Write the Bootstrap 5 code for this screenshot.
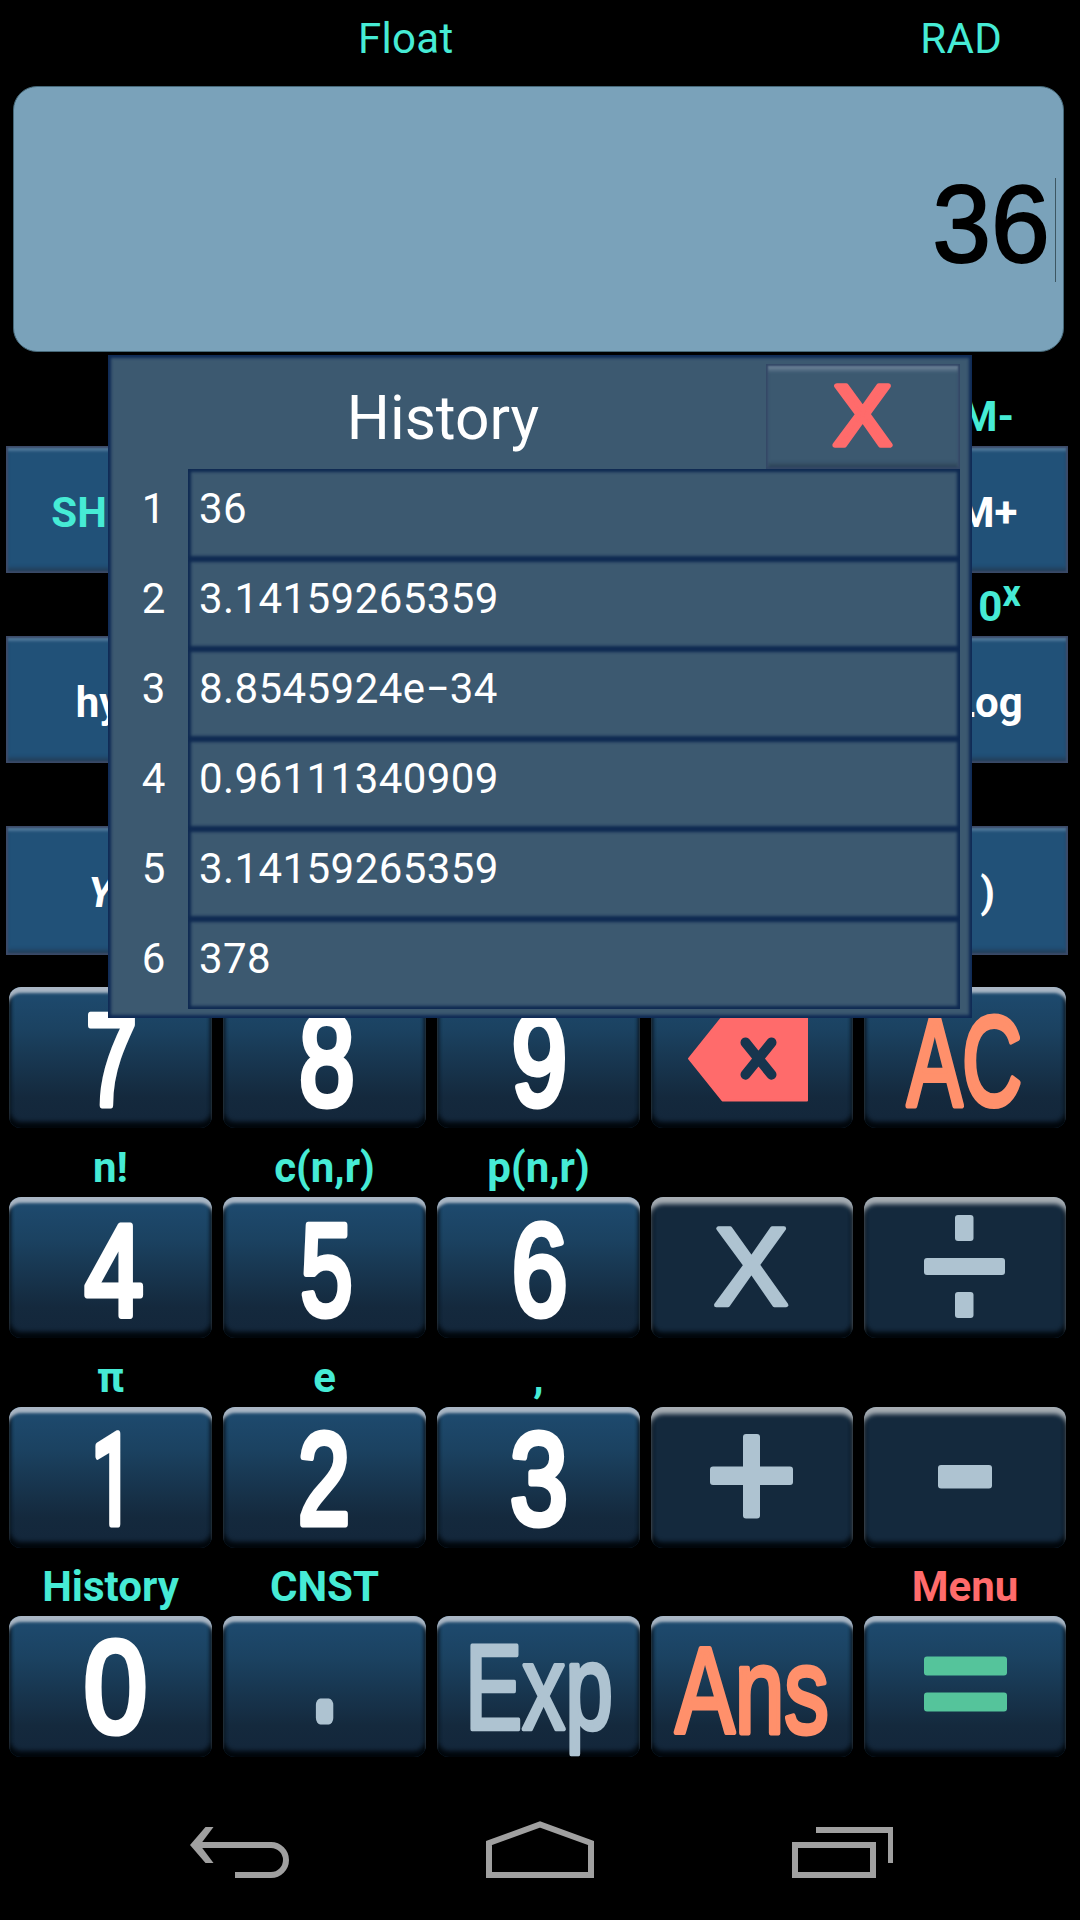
<!DOCTYPE html>
<html lang="en">
<head>
<meta charset="utf-8">
<meta name="viewport" content="width=device-width, initial-scale=1">
<title>Calculator</title>
<link href="https://cdn.jsdelivr.net/npm/bootstrap@5.3.0/dist/css/bootstrap.min.css" rel="stylesheet">
<style>
  body { background:#000; font-family:Roboto,"Noto Sans",sans-serif; font-size:42px; color:#fff; }
  .calc { width:1080px; height:1920px; }
  .teal { color:#46ebd5; }
  .coral { color:#ff6b6b; }
  .status-bar { height:86px; line-height:77px; padding-right:78px; letter-spacing:.3px; }
  .status-mode { margin-left:358px; }
  .lcd { height:266px; margin:0 16px 0 13px; padding:0 7px 0 0; background:#7aa2ba; border:1px solid #466878; border-radius:24px; }
  .caret { width:1px; height:104px; margin-top:22px; background:#3d5662; }
  .upper { padding:0 12px 0 6px; margin-top:35px; }
  .legend { height:59px; line-height:59px; font-weight:700; text-align:center; white-space:nowrap; }
  .legend sup, .flat-key sup { font-size:36px; top:-15px; line-height:0; }
  .flat-row { margin-bottom:4px; }
  .first-col { width:208px; }
  .last-col { width:166px; }
  .last-col .legend, .last-col .flat-key, .last-col.flat-key { padding-left:5px; }
  .flat-key { height:127px; padding-top:6px; line-height:121px; font-weight:700; text-align:center; background:#215178;
    box-shadow:inset 0 0 2px 2px #3c4a68, inset 0 5px 3px #4f7899, inset 0 -5px 4px #223e59; }
  .flat-row.bare { height:129px; margin-bottom:32px; }
  .bare .flat-key { height:129px; }
  .pad { padding:0 14px 0 9px; }
  .pad-row { display:grid; grid-template-columns:203px 203px 203px 202px 202px; gap:0 11px; }
  .key { height:141px; margin-bottom:10px; border-radius:12px; background:linear-gradient(#1e4b70,#1b4261 30%,#14293d 78%,#13263a);
    box-shadow:inset 0 7px 3px -1px #a9b6c4, inset 0 -5px 4px 1px #02070c, inset 0 0 4px 1px #10283c; }
  .key.op { background:#14293d; box-shadow:inset 0 8px 4px -1px #a6adb3, inset 0 -5px 4px 1px #02070c, inset 0 0 4px 1px #10283c; }
  .key svg { display:block; overflow:visible; }
  .face { font-family:"Liberation Sans",Arial,sans-serif; font-size:126px; text-anchor:middle; fill:currentColor; stroke:currentColor; stroke-width:4.5px; stroke-linejoin:round; }
  .num { font-size:130px; stroke-width:7px; }
  .mist { color:#aec3d1; }
  .orange { color:#ff906b; }
  .green { color:#55c49b; }
  .history { left:108px; top:355px; width:864px; height:663px; padding:9px 12px 9px 3px; background:#3c5970;
    box-shadow:inset 0 0 3px 3px #0f2a55; }
  .history-title { height:105px; font-size:60.5px; line-height:109px; padding-left:9px; }
  .close-key { width:194px; height:105px; box-shadow:inset 0 0 2px 2px #334766, inset 0 6px 4px #6c8296, inset 0 -5px 4px #2e4558; }
  .history-row { height:90px; line-height:80px; }
  .history-no { width:77px; padding-left:8px; text-align:center; }
  .history-val { padding-left:11px; letter-spacing:.42px; box-shadow:inset 0 0 3px 3px #0f2a52; }
</style>
<script src="https://cdn.jsdelivr.net/npm/bootstrap@5.3.0/dist/js/bootstrap.bundle.min.js"></script>
</head>
<body>
<main class="calc position-relative overflow-hidden d-flex flex-column">
  <header class="status-bar teal d-flex justify-content-between">
    <span class="status-mode">Float</span><span>RAD</span>
  </header>
  <section class="lcd d-flex justify-content-end align-items-center">
    <svg width="130" height="120" viewBox="0 0 130 120" color="#000"><text class="face" style="font-size:109px;stroke-width:2px" transform="translate(66 103) scale(.97 1)">36</text></svg>
    <div class="caret"></div>
  </section>

  <section class="upper">
    <div class="flat-row d-flex justify-content-between">
      <div class="first-col"><div class="legend"></div><div class="flat-key teal">SHIFT</div></div>
      <div class="last-col"><div class="legend teal">M-</div><div class="flat-key">M+</div></div>
    </div>
    <div class="flat-row d-flex justify-content-between">
      <div class="first-col"><div class="legend"></div><div class="flat-key">hyp</div></div>
      <div class="last-col"><div class="legend teal">10<sup>x</sup></div><div class="flat-key">Log</div></div>
    </div>
    <div class="legend"></div>
    <div class="flat-row bare d-flex justify-content-between">
      <div class="first-col flat-key"><em>Y</em><sup>x</sup></div>
      <div class="last-col flat-key">)</div>
    </div>
  </section>

  <section class="pad">
    <div class="pad-row">
      <div class="key"><svg width="203" height="141"><text class="face num" transform="translate(102.5 118) scale(.71 1)">7</text></svg></div>
      <div class="key"><svg width="203" height="141"><text class="face num" transform="translate(104 117.500) scale(.765 1)">8</text></svg></div>
      <div class="key"><svg width="203" height="141"><text class="face num" transform="translate(102.500 117.500) scale(.765 1)">9</text></svg></div>
      <div class="key"><svg width="202" height="141" role="img" aria-label="Backspace">
        <path d="M38 71.6L71.500 30H156V113.500H71.500Z" fill="#ff6b6b" stroke="#ff6b6b" stroke-width="2" stroke-linejoin="round"/>
        <path d="M94.500 55.500l26 32.200M120.500 55.500l-26 32.200" stroke="#17354e" stroke-width="10" stroke-linecap="round"/></svg></div>
      <div class="key orange"><svg width="202" height="141"><text class="face" style="stroke-width:6px" transform="translate(100.500 118) scale(.655 1)">AC</text></svg></div>
    </div>
    <div class="pad-row">
      <div class="legend teal">n!</div><div class="legend teal">c(n,r)</div><div class="legend teal">p(n,r)</div><div></div><div></div>
      <div class="key"><svg width="203" height="141"><text class="face num" transform="translate(105 118) scale(.81 1)">4</text></svg></div>
      <div class="key"><svg width="203" height="141"><text class="face num" transform="translate(103.500 118) scale(.72 1)">5</text></svg></div>
      <div class="key"><svg width="203" height="141"><text class="face num" transform="translate(102.500 118) scale(.77 1)">6</text></svg></div>
      <div class="key op mist"><svg width="202" height="141"><text class="face" style="font-size:112px" transform="translate(100 108) scale(1 1)">X</text></svg></div>
      <div class="key op mist"><svg width="202" height="141" fill="currentColor" role="img" aria-label="Divide"><rect x="91" y="18" width="18.500" height="26" rx="3"/><rect x="60" y="61" width="81" height="17" rx="3"/><rect x="91" y="95" width="18.500" height="26" rx="3"/></svg></div>
    </div>
    <div class="pad-row">
      <div class="legend teal">π</div><div class="legend teal">e</div><div class="legend teal">,</div><div></div><div></div>
      <div class="key"><svg width="203" height="141"><text class="face num" style="font-family:Roboto;font-size:126px" transform="translate(103.500 117) scale(.6 1)">1</text></svg></div>
      <div class="key"><svg width="203" height="141"><text class="face num" transform="translate(101 117) scale(.72 1)">2</text></svg></div>
      <div class="key"><svg width="203" height="141"><text class="face num" transform="translate(102 117) scale(.8 1)">3</text></svg></div>
      <div class="key op mist"><svg width="202" height="141" fill="currentColor" role="img" aria-label="Plus"><rect x="59" y="59.500" width="83" height="18.500" rx="3"/><rect x="92" y="27" width="17" height="84.500" rx="3"/></svg></div>
      <div class="key op mist"><svg width="202" height="141" fill="currentColor" role="img" aria-label="Minus"><rect x="74" y="58" width="54" height="23.500" rx="3"/></svg></div>
    </div>
    <div class="pad-row" style="margin-top:-1px">
      <div class="legend teal">History</div><div class="legend teal">CNST</div><div></div><div></div><div class="legend coral">Menu</div>
      <div class="key"><svg width="203" height="141"><text class="face num" transform="translate(106.500 116) scale(.87 1)">0</text></svg></div>
      <div class="key mist"><svg width="203" height="141"><text class="face" style="font-size:120px;stroke-width:13px" transform="translate(101.500 102) scale(.71 1)">.</text></svg></div>
      <div class="key mist"><svg width="203" height="141"><text class="face" style="font-size:121px" transform="translate(102 112.500) scale(.71 1)">Exp</text></svg></div>
      <div class="key orange"><svg width="202" height="141"><text class="face" style="font-size:123px;stroke-width:5px" transform="translate(101 117) scale(.725 1)">Ans</text></svg></div>
      <div class="key green"><svg width="202" height="141" fill="currentColor" role="img" aria-label="Equals"><rect x="60" y="40.500" width="83" height="19" rx="3"/><rect x="60" y="76.500" width="83" height="19" rx="3"/></svg></div>
    </div>
  </section>

  <nav class="mt-auto d-flex justify-content-between" style="padding:0 187px 36px 189px">
    <svg width="100" height="64" viewBox="189 1820 100 64" fill="none" stroke="#a0a0a0" stroke-width="6"><path d="M235 1875H271A15 15 0 0 0 271 1845H196"/><path d="M190 1845L205.500 1827H213.500L200 1845L213.500 1863H205.500Z" fill="#a0a0a0" stroke="none"/></svg>
    <svg width="108" height="64" viewBox="486 1820 108 64" fill="none" stroke="#a0a0a0" stroke-width="6"><path d="M489 1843L540 1824.500L591 1843V1875H489Z"/></svg>
    <svg width="102" height="64" viewBox="791 1820 102 64" fill="none" stroke="#a0a0a0" stroke-width="6"><path d="M795 1845H873V1875H795ZM816 1830H891V1863"/></svg>
  </nav>

  <section class="history position-absolute" role="dialog" aria-label="History">
    <div class="d-flex">
      <div class="history-title flex-grow-1 text-center">History</div>
      <div class="close-key coral"><svg class="d-block" width="194" height="105"><text class="face" style="font-size:85px;stroke-width:5.500px" transform="translate(96.500 81) scale(1.030 1)">X</text></svg></div>
    </div>
    <div class="history-row d-flex"><div class="history-no">1</div><div class="history-val flex-grow-1">36</div></div>
    <div class="history-row d-flex"><div class="history-no">2</div><div class="history-val flex-grow-1">3.14159265359</div></div>
    <div class="history-row d-flex"><div class="history-no">3</div><div class="history-val flex-grow-1">8.8545924e−34</div></div>
    <div class="history-row d-flex"><div class="history-no">4</div><div class="history-val flex-grow-1">0.96111340909</div></div>
    <div class="history-row d-flex"><div class="history-no">5</div><div class="history-val flex-grow-1">3.14159265359</div></div>
    <div class="history-row d-flex"><div class="history-no">6</div><div class="history-val flex-grow-1">378</div></div>
  </section>
</main>
</body>
</html>
